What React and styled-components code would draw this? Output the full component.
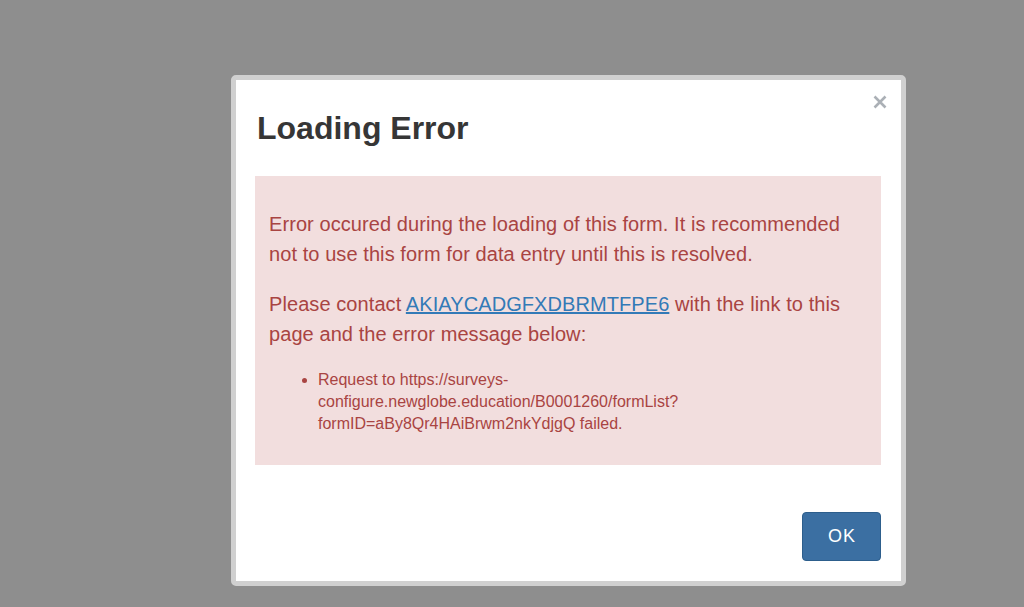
import React from "react";
import styled, { createGlobalStyle } from "styled-components";

const Global = createGlobalStyle`
  html, body { margin: 0; padding: 0; }
  body { font-family: "Liberation Sans", Arial, sans-serif; }
`;

const Overlay = styled.div`
  width: 100%;
  height: 607px;
  background: #8e8e8e;
  overflow: hidden;
  display: flex;
  align-items: flex-start;
`;

const Modal = styled.div`
  position: relative;
  margin: 75px 0 0 231px;
  width: 675px;
  height: 511px;
  box-sizing: border-box;
  border: 5px solid #d0d0d0;
  border-radius: 5px;
  background: #fff;
  display: flex;
  flex-direction: column;
  padding: 30px 20px 20px 19px;
`;

const Close = styled.button`
  position: absolute;
  top: 14px;
  right: 14px;
  width: 15px;
  height: 15px;
  padding: 0;
  border: 0;
  background: none;
  cursor: pointer;
  display: flex;
  align-items: center;
  justify-content: center;
`;

const Title = styled.h1`
  margin: 0;
  padding-left: 2px;
  font-size: 32px;
  line-height: 36px;
  font-weight: bold;
  color: #363636;
`;

const Alert = styled.div`
  margin-top: 30px;
  background: #f2dede;
  color: #a94442;
  padding: 33px 22px 30px 14px;
`;

const Para = styled.p`
  margin: 0 0 20px;
  font-size: 20px;
  line-height: 30px;
  letter-spacing: 0.08px;
`;

const Link = styled.a`
  color: #337ab7;
  text-decoration: underline;
`;

const List = styled.ul`
  margin: 4px 0 0;
  padding-left: 49px;
  font-size: 16px;
  line-height: 22px;
`;

const Footer = styled.div`
  margin-top: auto;
  display: flex;
  justify-content: flex-end;
`;

const OkButton = styled.button`
  width: 79px;
  height: 49px;
  background: #3b6fa2;
  border: 1px solid #2d5e8c;
  border-radius: 4px;
  color: #fff;
  font-family: "Liberation Sans", Arial, sans-serif;
  font-size: 18px;
  letter-spacing: 1px;
  padding: 0 0 0 1px;
  cursor: pointer;
`;

export default function App() {
  return (
    <>
      <Global />
      <Overlay>
        <Modal>
          <Close aria-label="Close">
            <svg width="14" height="14" viewBox="0 0 14 14">
              <path d="M1.5 1.5 L12.5 12.5 M12.5 1.5 L1.5 12.5" stroke="#abb0b6" strokeWidth="2.6" strokeLinecap="butt" />
            </svg>
          </Close>
          <Title>Loading Error</Title>
          <Alert>
            <Para>
              Error occured during the loading of this form. It is recommended not to use this form for data entry until this is resolved.
            </Para>
            <Para>
              Please contact <Link href="#">AKIAYCADGFXDBRMTFPE6</Link> with the link to this page and the error message below:
            </Para>
            <List>
              <li>
                Request to https://surveys-configure.newglobe.education/B0001260/formList?<wbr />formID=aBy8Qr4HAiBrwm2nkYdjgQ failed.
              </li>
            </List>
          </Alert>
          <Footer>
            <OkButton>OK</OkButton>
          </Footer>
        </Modal>
      </Overlay>
    </>
  );
}
